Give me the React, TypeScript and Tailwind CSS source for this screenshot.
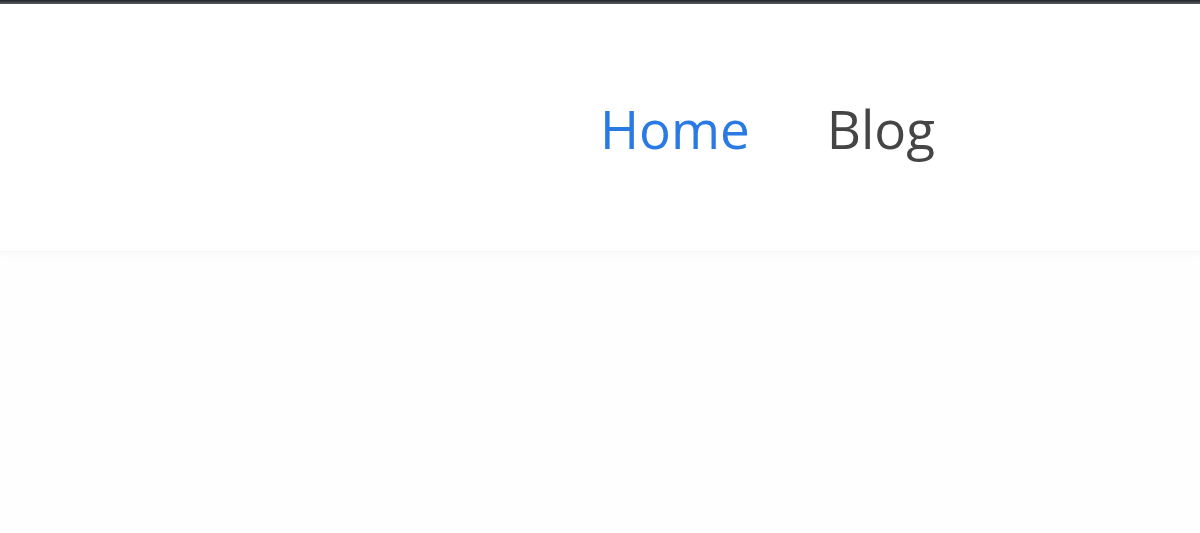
export default function App() {
  return (
    <div className="min-h-[533px] bg-[#fefefe] font-['Open_Sans',sans-serif]">
      <div className="h-[4px] bg-gradient-to-b from-[#1f2427] to-[#5b6166]" />
      <header className="h-[248px] bg-white shadow-[0_3px_8px_rgba(0,0,0,0.025)] border-b border-[#f6f6f6]">
        <div className="mx-auto flex h-full max-w-[670px] items-center justify-end pt-[2px]">
          <nav className="flex items-center gap-[77px] text-[53px] leading-none">
            <a className="text-[#2a7ae4]">Home</a>
            <a className="text-[#454545]">Blog</a>
          </nav>
        </div>
      </header>
    </div>
  )
}
